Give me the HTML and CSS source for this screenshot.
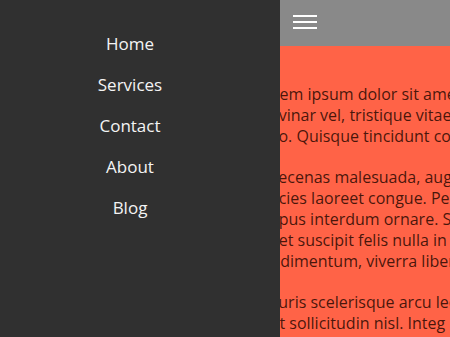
FILE: index.html
```html
<!DOCTYPE html>
<html lang="en">
<head>
    <meta charset="UTF-8">
    <meta name="viewport" content="width=device-width, initial-scale=1.0">
    <title>Push Menu</title>
    <link rel="stylesheet" href="styles.css">
</head>
<body>
    <nav class="menu">
        <ul>
            <li><a href="#">Home</a></li>
            <li><a href="#">Services</a></li>
            <li><a href="#">Contact</a></li>
            <li><a href="#">About</a></li>
            <li><a href="#">Blog</a></li>
        </ul>
    </nav>

    <div class="page">
        <header class="topbar">
            <button class="burger" aria-label="Menu">
                <span></span>
                <span></span>
                <span></span>
            </button>
        </header>

        <!-- page is pushed right, the open menu covers the start of each line -->
        <main class="content">
            <p>
                <span class="line">Lorem ipsum dolor sit amet</span>
                <span class="line">pulvinar vel, tristique vitae</span>
                <span class="line">odio. Quisque tincidunt co</span>
            </p>
            <p>
                <span class="line">Maecenas malesuada, aug</span>
                <span class="line">dulcies laoreet congue. Pe</span>
                <span class="line">ampus interdum ornare. S</span>
                <span class="line">amet suscipit felis nulla in</span>
                <span class="line">vel dimentum, viverra liber</span>
            </p>
            <p>
                <span class="line">Mauris scelerisque arcu leo</span>
                <span class="line">erat sollicitudin nisl. Integ</span>
            </p>
        </main>
    </div>
</body>
</html>
```

FILE: styles.css
```css
body {
    font-family: "Open Sans", Arial, sans-serif;
    margin: 0;
    padding: 0;
    overflow: hidden;
    background-color: tomato;
}
.menu {
    position: fixed;
    top: 0;
    left: 0;
    width: 280px;
    height: 100%;
    background-color: #303030;
    z-index: 2;
}
.menu ul {
    list-style: none;
    margin: 0;
    padding: 23px 20px 0 0;
}
.menu a {
    display: block;
    height: 41px;
    line-height: 41px;
    text-align: center;
    color: #f4f4f4;
    font-size: 17px;
    text-decoration: none;
}
.page {
    min-height: 100vh;
}
.topbar {
    height: 46px;
    background-color: #898989;
    padding-left: 293px;
    display: flex;
    align-items: flex-start;
}
.burger {
    margin-top: 15px;
    padding: 0;
    border: none;
    background: none;
    width: 24px;
    display: flex;
    flex-direction: column;
    gap: 4px;
    cursor: pointer;
}
.burger span {
    display: block;
    height: 2px;
    background-color: white;
}
.content {
    padding: 38px 0 0 255px;
    color: rgba(40, 8, 0, 0.85);
    font-size: 16px;
    line-height: 21px;
}
.content p {
    margin: 0 0 20px;
}
.line {
    display: block;
    white-space: nowrap;
}
```
